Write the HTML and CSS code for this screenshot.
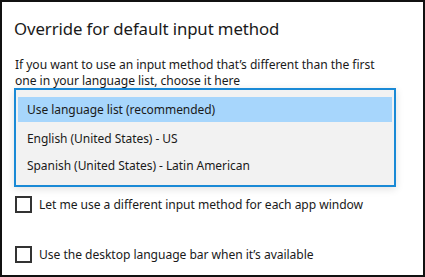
FILE: index.html
```html
<!DOCTYPE html>
<html>
<head>
<meta charset="utf-8">
<link rel="stylesheet" href="styles.css">
</head>
<body>
<div class="panel">
  <h1 class="title">Override for default input method</h1>
  <p class="desc">If you want to use an input method that’s different than the first one in your language list, choose it here</p>
  <div class="dropdown">
    <div class="item selected">Use language list (recommended)</div>
    <div class="item">English (United States) - US</div>
    <div class="item">Spanish (United States) - Latin American</div>
  </div>
  <label class="check first"><span class="box"></span><span>Let me use a different input method for each app window</span></label>
  <label class="check second"><span class="box"></span><span>Use the desktop language bar when it’s available</span></label>
</div>
</body>
</html>
```
FILE: styles.css
```css
* { box-sizing: border-box; }
html, body { margin: 0; padding: 0; background: #fff; }
body { font-family: "Noto Sans", "Open Sans", sans-serif; color: #1a1a1a; }
.panel {
  width: 425px;
  height: 277px;
  border: 2px solid #111;
  padding: 0 12px;
  background: #fff;
  overflow: hidden;
}
.title {
  font-size: 16.8px;
  font-weight: 400;
  margin: 0;
  padding-top: 16px;
  line-height: 22px;
  letter-spacing: -0.1px;
}
.desc {
  font-size: 12.1px;
  line-height: 16px;
  margin: 17px 0 0 1px;
  max-width: 362px;
  letter-spacing: -0.05px;
}
.dropdown {
  margin-top: -1px;
  width: 382px;
  height: 99px;
  border: 2px solid #1a8ad6;
  background: #f2f2f2;
  padding: 7px 2px 0 2px;
  box-shadow: 0 2px 8px rgba(0,0,0,0.12);
}
.item {
  height: 27.5px;
  font-size: 12px;
  padding-left: 9px;
  display: flex;
  align-items: center;
  letter-spacing: -0.05px;
}
.item.selected {
  background: #a7d6fc;
  height: 25px;
  margin-bottom: 2.5px;
}
.check {
  display: flex;
  align-items: center;
  font-size: 12.1px;
  letter-spacing: -0.05px;
  margin-left: 1px;
  height: 17px;
}
.check.first { margin-top: 9px; }
.check.second { margin-top: 33px; }
.box {
  width: 17px;
  height: 17px;
  border: 2px solid #333;
  margin-right: 7px;
  flex: none;
}
```
